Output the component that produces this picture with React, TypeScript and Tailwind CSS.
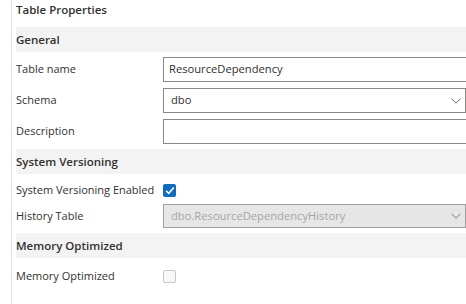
import React from 'react';

const font = { fontFamily: '"Segoe UI", "Open Sans", "Noto Sans", sans-serif' };

function Chevron({ color = '#6b6b6b' }: { color?: string }) {
  return (
    <svg width="10" height="6" viewBox="0 0 10 6" className="absolute right-[4px] top-1/2 -translate-y-1/2">
      <path d="M0.5 0.7 L5 5.2 L9.5 0.7" fill="none" stroke={color} strokeWidth="1" />
    </svg>
  );
}

function SectionHeader({ title }: { title: string }) {
  return (
    <div className="h-[25px] bg-[#f3f3f3] flex items-center text-[11.5px] font-semibold text-[#323130] whitespace-nowrap">
      {title}
    </div>
  );
}

function Row({ label, children, className = '' }: { label: string; children: React.ReactNode; className?: string }) {
  return (
    <div className={`flex items-center ${className}`}>
      <div className="w-[147px] shrink-0 text-[11px] text-[#323130] whitespace-nowrap">{label}</div>
      <div className="flex-1 min-w-0">{children}</div>
    </div>
  );
}

export default function App() {
  return (
    <div className="w-[466px] h-[304px] bg-white overflow-hidden" style={font}>
      <div className="ml-[11px] h-full border-l border-[#e1e1e1] pl-[4px] w-[500px]">
        <div className="h-[27px] pt-[1px] text-[11.5px] font-semibold text-[#323130] leading-[18px]">
          Table Properties
        </div>

        <SectionHeader title="General" />
        <div className="flex flex-col gap-[6px] pt-[5px] pb-[5px]">
          <Row label="Table name">
            <div className="h-[25px] border border-[#8a8886] flex items-center px-[5px] text-[11.2px] text-[#323130]">
              ResourceDependency
            </div>
          </Row>
          <Row label="Schema">
            <div className="relative h-[25px] border border-[#8a8886] flex items-center px-[7px] text-[11.2px] text-[#323130] w-[303px]">
              dbo
              <Chevron />
            </div>
          </Row>
          <Row label="Description">
            <div className="h-[25px] border border-[#8a8886]" />
          </Row>
        </div>

        <SectionHeader title="System Versioning" />
        <div className="flex flex-col pt-[5px] pb-[5px]">
          <Row label="System Versioning Enabled" className="h-[22px]">
            <div className="w-[13px] h-[13px] rounded-[2px] bg-[#0f6cbd] flex items-center justify-center">
              <svg width="10" height="9" viewBox="0 0 10 9">
                <path d="M1.2 4.8 L3.8 7.3 L8.8 1.5" fill="none" stroke="white" strokeWidth="1.6" />
              </svg>
            </div>
          </Row>
          <Row label="History Table" className="mt-[3px]">
            <div className="relative h-[24px] border border-[#a0a0a0] bg-[#e6e6e6] flex items-center px-[7px] text-[11.2px] text-[#a6a6a6] w-[303px] whitespace-nowrap">
              dbo.ResourceDependencyHistory
              <Chevron color="#7a7a7a" />
            </div>
          </Row>
        </div>

        <SectionHeader title="Memory Optimized" />
        <div className="flex flex-col pt-[4px]">
          <Row label="Memory Optimized" className="h-[28px]">
            <div className="w-[13px] h-[13px] rounded-[2px] border border-[#c8c6c4] bg-[#f8f8f8]" />
          </Row>
        </div>
      </div>
    </div>
  );
}
